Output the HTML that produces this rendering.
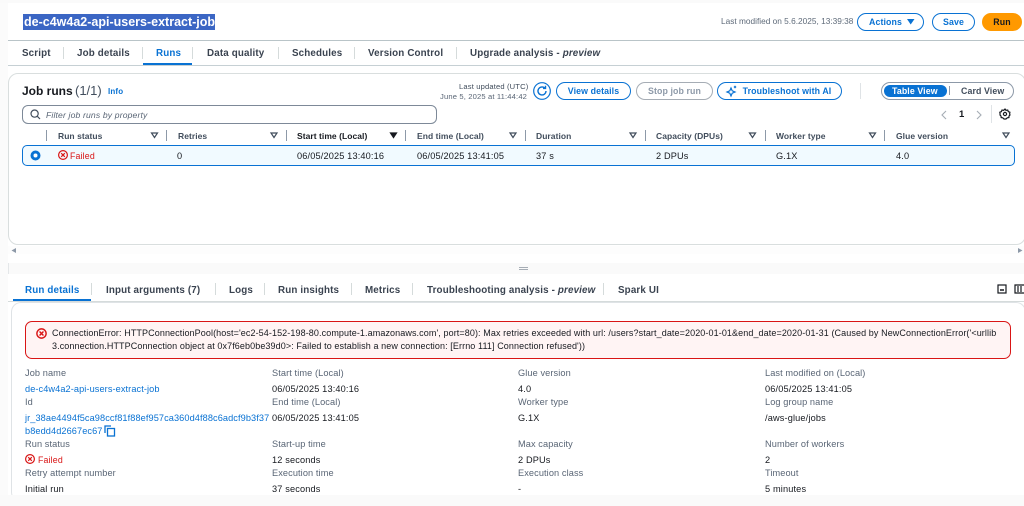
<!DOCTYPE html>
<html><head><meta charset="utf-8"><style>
html,body{margin:0;padding:0;width:1024px;height:506px;overflow:hidden;background:#fff}
body{position:relative;font-family:"Liberation Sans",sans-serif;font-size:9.5px;color:#16191f;letter-spacing:.15px;filter:blur(.3px)}
.t{position:absolute;white-space:nowrap;line-height:12px}
.b{font-weight:700}
.tab{font-size:9.8px;font-weight:700;color:#3a4350;letter-spacing:.15px}
.l{color:#596575;font-size:9.2px;letter-spacing:.1px}
.v{color:#16191f;font-size:9.2px}
.lk{color:#0972d3;font-size:9.2px;letter-spacing:.09px}
.a{color:#0972d3}
.box{position:absolute;box-sizing:border-box}
.btn{position:absolute;box-sizing:border-box;border:1.3px solid #0972d3;border-radius:10px;height:18px;color:#0972d3;font-weight:700;font-size:8.8px;letter-spacing:.1px;text-align:center;line-height:16px;background:#fff;white-space:nowrap}
.sep{position:absolute;width:1px;background:#d5dbdb}
.hs{position:absolute;width:1px;height:11px;top:130px;background:#8d99a8}
.th{color:#414d5c;font-weight:700;font-size:8.5px;letter-spacing:.05px}
.al{font-size:9px;letter-spacing:.1px}
svg{position:absolute;overflow:visible}
</style></head><body>
<div class="box" style="left:0;top:0;width:8px;height:506px;background:#fbfbfb"></div>
<div class="box" style="left:0;top:0;width:1024px;height:3px;background:#fafafa"></div>
<div class="box" style="left:23px;top:14px;width:192px;height:16px;background:#3b66c4"></div>
<div class="t b" style="left:24px;top:15px;font-size:12.5px;line-height:15px;color:#fff;letter-spacing:0">de-c4w4a2-api-users-extract-job</div>
<div class="t" style="left:721px;top:15px;font-size:8.3px;letter-spacing:0;color:#5f6b7a">Last modified on 5.6.2025, 13:39:38</div>
<div class="btn" style="left:857px;top:13px;width:67px;text-align:left;padding-left:11px">Actions</div>
<svg style="left:907px;top:19px" width="8" height="6"><path d="M0 0h7.500L3.700 5.500z" fill="#0972d3"/></svg>
<div class="btn" style="left:932px;top:13px;width:43px">Save</div>
<div class="btn" style="left:982px;top:13px;width:40px;background:#ff9900;border-color:#ff9900;color:#16191f">Run</div>

<div class="box" style="left:8px;top:40px;width:1016px;height:1px;background:#b9c4c8"></div>
<div class="box" style="left:8px;top:65px;width:1016px;height:1px;background:#c6d0d4"></div>
<div class="t tab" style="left:22px;top:48px">Script</div>
<div class="t tab" style="left:77px;top:48px">Job details</div>
<div class="t tab a" style="left:156px;top:48px;color:#0972d3">Runs</div>
<div class="t tab" style="left:207px;top:48px">Data quality</div>
<div class="t tab" style="left:292px;top:48px">Schedules</div>
<div class="t tab" style="left:368px;top:48px">Version Control</div>
<div class="t tab" style="left:470px;top:48px">Upgrade analysis - <i>preview</i></div>
<div class="sep" style="left:63px;top:47px;height:12px"></div>
<div class="sep" style="left:142px;top:47px;height:12px"></div>
<div class="sep" style="left:192px;top:47px;height:12px"></div>
<div class="sep" style="left:278px;top:47px;height:12px"></div>
<div class="sep" style="left:354px;top:47px;height:12px"></div>
<div class="sep" style="left:456px;top:47px;height:12px"></div>
<div class="box" style="left:143px;top:63px;width:49px;height:2px;background:#0972d3"></div>

<div class="box" style="left:8px;top:73px;width:1018px;height:172px;border:1px solid #d9dede;border-radius:10px"></div>
<div class="t b" style="left:22px;top:83px;font-size:12px;line-height:16px;letter-spacing:0">Job runs</div>
<div class="t" style="left:75px;top:83px;font-size:13px;line-height:16px;letter-spacing:0;color:#414d5c">(1/1)</div>
<div class="t b a" style="left:108px;top:86px;font-size:8px">Info</div>
<div class="t" style="left:459px;top:81px;font-size:7.6px;color:#414d5c">Last updated (UTC)</div>
<div class="t" style="left:440px;top:91px;font-size:7.6px;color:#596575">June 5, 2025 at 11:44:42</div>
<svg style="left:533px;top:82px" width="18" height="18" viewBox="0 0 18 18" fill="none" stroke="#0972d3"><circle cx="9" cy="9" r="8.3" stroke-width="1.2"/><path d="M13 9a4 4 0 1 1-1.3-3M12.5 3.8v2.6H10" stroke-width="1.4"/></svg>
<div class="btn" style="left:556px;top:82px;width:75px">View details</div>
<div class="btn" style="left:636px;top:82px;width:77px;color:#8d99a8;border-color:#a6adb5">Stop job run</div>
<div class="btn" style="left:717px;top:82px;width:125px;padding-left:15px">Troubleshoot with AI</div>
<svg style="left:726px;top:85px" width="12" height="12" viewBox="0 0 12 12" fill="none" stroke="#0972d3" stroke-width="1.2"><path d="M5 3l1.200 2.800L9 7 6.200 8.200 5 11 3.800 8.200 1 7l2.800-1.200zM9 .8v2.400M7.800 2h2.400"/></svg>
<div class="sep" style="left:860px;top:83px;height:16px;background:#dfe3e6"></div>
<div class="box" style="left:881px;top:82px;width:133px;height:18px;border:1px solid #8d99a8;border-radius:9px"></div>
<div class="box" style="left:884px;top:85px;width:63px;height:12px;background:#0972d3;border-radius:6px"></div>
<div class="t b" style="left:892px;top:85px;color:#fff;font-size:8.8px;letter-spacing:.1px">Table View</div>
<div class="sep" style="left:949px;top:86px;height:9px;background:#8d99a8"></div>
<div class="t b" style="left:961px;top:85px;color:#414d5c;font-size:8.8px;letter-spacing:.1px">Card View</div>

<div class="box" style="left:22px;top:105px;width:415px;height:19px;border:1px solid #7d8998;border-radius:6px"></div>
<svg style="left:30px;top:109px" width="11" height="11" viewBox="0 0 11 11" fill="none" stroke="#414d5c" stroke-width="1.2"><circle cx="4.6" cy="4.6" r="3.6"/><path d="M7.3 7.3L10 10"/></svg>
<div class="t" style="left:46px;top:109px;font-style:italic;color:#596575;font-size:8.6px">Filter job runs by property</div>

<svg style="left:940px;top:110px" width="60" height="10" viewBox="0 0 60 10" fill="none" stroke="#a6adb5" stroke-width="1.1"><path d="M6 1L2 5l4 4M37 1l4 4-4 4"/></svg>
<div class="t b" style="left:959px;top:109px;font-size:9.5px">1</div>
<div class="sep" style="left:991px;top:105px;height:18px;background:#dfe3e6"></div>
<svg style="left:999px;top:108px" width="12" height="12" viewBox="0 0 12 12" fill="none" stroke="#16191f" stroke-width="1.2"><circle cx="6" cy="6" r="1.6"/><path d="M6 1l1 1.300 1.700-.3.600 1.600 1.600.6-.3 1.700L11 7l-1 1-.1 1.600-1.600.2L7 11H5L3.800 9.800l-1.600-.2L2 8 1 7l.1-1.100-.3-1.700 1.600-.6L3 2l1.700.3z"/></svg>

<div class="hs" style="left:46px"></div><div class="hs" style="left:166px"></div><div class="hs" style="left:286px"></div><div class="hs" style="left:405px"></div><div class="hs" style="left:525px"></div><div class="hs" style="left:645px"></div><div class="hs" style="left:765px"></div><div class="hs" style="left:884px"></div>
<div class="t th" style="left:58px;top:130px">Run status</div>
<div class="t th" style="left:178px;top:130px">Retries</div>
<div class="t b" style="left:297px;top:130px;font-size:8.5px;letter-spacing:.05px">Start time (Local)</div>
<div class="t th" style="left:417px;top:130px">End time (Local)</div>
<div class="t th" style="left:536px;top:130px">Duration</div>
<div class="t th" style="left:656px;top:130px">Capacity (DPUs)</div>
<div class="t th" style="left:776px;top:130px">Worker type</div>
<div class="t th" style="left:896px;top:130px">Glue version</div>
<svg style="left:0;top:0" width="1024" height="140" fill="none" stroke="#414d5c" stroke-width="1.2">
<path d="M151.500 133h6l-3 4.500zM271 133h6l-3 4.500zM510 133h6l-3 4.500zM630 133h6l-3 4.500zM749.500 133h6l-3 4.500zM869.500 133h6l-3 4.500zM1003 133h6l-3 4.500z"/>
<path d="M390.500 133h6l-3 4.500z" fill="#16191f" stroke="#16191f"/>
</svg>

<div class="box" style="left:22px;top:145px;width:993px;height:21px;border:1.3px solid #0972d3;border-radius:5px;background:#f1faff"></div>
<svg style="left:30px;top:150px" width="11" height="11" viewBox="0 0 11 11"><circle cx="5.500" cy="5.500" r="5" fill="#0972d3"/><circle cx="5.500" cy="5.500" r="2" fill="#fff"/></svg>
<svg style="left:58px;top:150px" width="10" height="10" viewBox="0 0 10 10" fill="none" stroke="#d91515" stroke-width="1.2"><circle cx="5" cy="5" r="4.400"/><path d="M3.200 3.200l3.600 3.600M6.800 3.200l-3.600 3.600"/></svg>
<div class="t" style="left:70px;top:150px;color:#d91515;font-size:8.8px">Failed</div>
<div class="t v" style="left:177px;top:150px">0</div>
<div class="t v" style="left:297px;top:150px">06/05/2025 13:40:16</div>
<div class="t v" style="left:417px;top:150px">06/05/2025 13:41:05</div>
<div class="t v" style="left:536px;top:150px">37 s</div>
<div class="t v" style="left:656px;top:150px">2 DPUs</div>
<div class="t v" style="left:776px;top:150px">G.1X</div>
<div class="t v" style="left:896px;top:150px">4.0</div>

<div class="box" style="left:8px;top:246px;width:1016px;height:8px;background:#fdfdfd"></div>
<svg style="left:10px;top:247px" width="1014" height="7" fill="#8d99a8"><path d="M6 1v5L1.500 3.500zM1008 1v5l4.500-2.500z"/></svg>
<div class="box" style="left:8px;top:263px;width:1016px;height:11px;background:#fafafa;border-left:1px solid #e4e7e9"></div>
<div class="box" style="left:519px;top:267px;width:9px;height:1px;background:#a6adb5"></div>
<div class="box" style="left:519px;top:269px;width:9px;height:1px;background:#a6adb5"></div>

<div class="t tab a" style="left:25px;top:285px;color:#0972d3">Run details</div>
<div class="t tab" style="left:106px;top:285px">Input arguments (7)</div>
<div class="t tab" style="left:229px;top:285px">Logs</div>
<div class="t tab" style="left:278px;top:285px">Run insights</div>
<div class="t tab" style="left:365px;top:285px">Metrics</div>
<div class="t tab" style="left:427px;top:285px">Troubleshooting analysis - <i>preview</i></div>
<div class="t tab" style="left:618px;top:285px">Spark UI</div>
<div class="sep" style="left:91px;top:283px;height:12px"></div>
<div class="sep" style="left:215px;top:283px;height:12px"></div>
<div class="sep" style="left:264px;top:283px;height:12px"></div>
<div class="sep" style="left:351px;top:283px;height:12px"></div>
<div class="sep" style="left:412px;top:283px;height:12px"></div>
<div class="sep" style="left:603px;top:283px;height:12px"></div>
<div class="box" style="left:8px;top:301px;width:1016px;height:1px;background:#d5dbdb"></div>
<div class="box" style="left:13px;top:299px;width:78px;height:2px;background:#0972d3"></div>
<svg style="left:997px;top:284px" width="27" height="10" fill="none" stroke="#16191f" stroke-width="1.2"><rect x="1" y="1" width="8" height="8"/><path d="M3 6h4" stroke-width="1.500"/><path d="M27 1h-9v8h9M21 2v6M24 2v6" stroke-width="1.200"/></svg>

<div class="box" style="left:11px;top:302px;width:1015px;height:200px;border:1px solid #dfe3e6;border-radius:10px;border-bottom:0"></div>
<div class="box" style="left:25px;top:321px;width:986px;height:38px;border:1.3px solid #d91515;border-radius:7px;background:#fff4f4"></div>
<svg style="left:36px;top:328px" width="11" height="11" viewBox="0 0 10 10" fill="none" stroke="#d91515" stroke-width="1.3"><circle cx="5" cy="5" r="4.200"/><path d="M3.200 3.200l3.600 3.600M6.800 3.200l-3.600 3.600"/></svg>
<div class="t al" style="left:52px;top:327px">ConnectionError: HTTPConnectionPool(host='ec2-54-152-198-80.compute-1.amazonaws.com', port=80): Max retries exceeded with url: /users?start_date=2020-01-01&amp;end_date=2020-01-31 (Caused by NewConnectionError('&lt;urllib</div>
<div class="t al" style="left:52px;top:340px">3.connection.HTTPConnection object at 0x7f6eb0be39d0&gt;: Failed to establish a new connection: [Errno 111] Connection refused'))</div>

<div class="t l" style="left:25px;top:367px">Job name</div>
<div class="t lk" style="left:25px;top:383px">de-c4w4a2-api-users-extract-job</div>
<div class="t l" style="left:25px;top:396px">Id</div>
<div class="t lk" style="left:25px;top:412px">jr_38ae4494f5ca98ccf81f88ef957ca360d4f88c6adcf9b3f37</div>
<div class="t lk" style="left:25px;top:425px">b8edd4d2667ec67</div>
<svg style="left:104px;top:425px" width="11" height="12" fill="none" stroke="#0972d3" stroke-width="1.300"><path d="M1 8V1h6"/><rect x="3.500" y="3.500" width="7" height="7.500"/></svg>
<div class="t l" style="left:25px;top:438px">Run status</div>
<svg style="left:25px;top:454px" width="10" height="10" viewBox="0 0 10 10" fill="none" stroke="#d91515" stroke-width="1.200"><circle cx="5" cy="5" r="4.400"/><path d="M3.200 3.200l3.600 3.600M6.800 3.200l-3.600 3.600"/></svg>
<div class="t" style="left:38px;top:454px;color:#d91515;font-size:8.8px">Failed</div>
<div class="t l" style="left:25px;top:467px">Retry attempt number</div>
<div class="t v" style="left:25px;top:483px">Initial run</div>

<div class="t l" style="left:272px;top:367px">Start time (Local)</div>
<div class="t v" style="left:272px;top:383px">06/05/2025 13:40:16</div>
<div class="t l" style="left:272px;top:396px">End time (Local)</div>
<div class="t v" style="left:272px;top:412px">06/05/2025 13:41:05</div>
<div class="t l" style="left:272px;top:438px">Start-up time</div>
<div class="t v" style="left:272px;top:454px">12 seconds</div>
<div class="t l" style="left:272px;top:467px">Execution time</div>
<div class="t v" style="left:272px;top:483px">37 seconds</div>

<div class="t l" style="left:518px;top:367px">Glue version</div>
<div class="t v" style="left:518px;top:383px">4.0</div>
<div class="t l" style="left:518px;top:396px">Worker type</div>
<div class="t v" style="left:518px;top:412px">G.1X</div>
<div class="t l" style="left:518px;top:438px">Max capacity</div>
<div class="t v" style="left:518px;top:454px">2 DPUs</div>
<div class="t l" style="left:518px;top:467px">Execution class</div>
<div class="t v" style="left:518px;top:483px">-</div>

<div class="t l" style="left:765px;top:367px">Last modified on (Local)</div>
<div class="t v" style="left:765px;top:383px">06/05/2025 13:41:05</div>
<div class="t l" style="left:765px;top:396px">Log group name</div>
<div class="t v" style="left:765px;top:412px">/aws-glue/jobs</div>
<div class="t l" style="left:765px;top:438px">Number of workers</div>
<div class="t v" style="left:765px;top:454px">2</div>
<div class="t l" style="left:765px;top:467px">Timeout</div>
<div class="t v" style="left:765px;top:483px">5 minutes</div>

<div class="box" style="left:0;top:495px;width:1024px;height:11px;background:#fafafa"></div>
</body></html>
